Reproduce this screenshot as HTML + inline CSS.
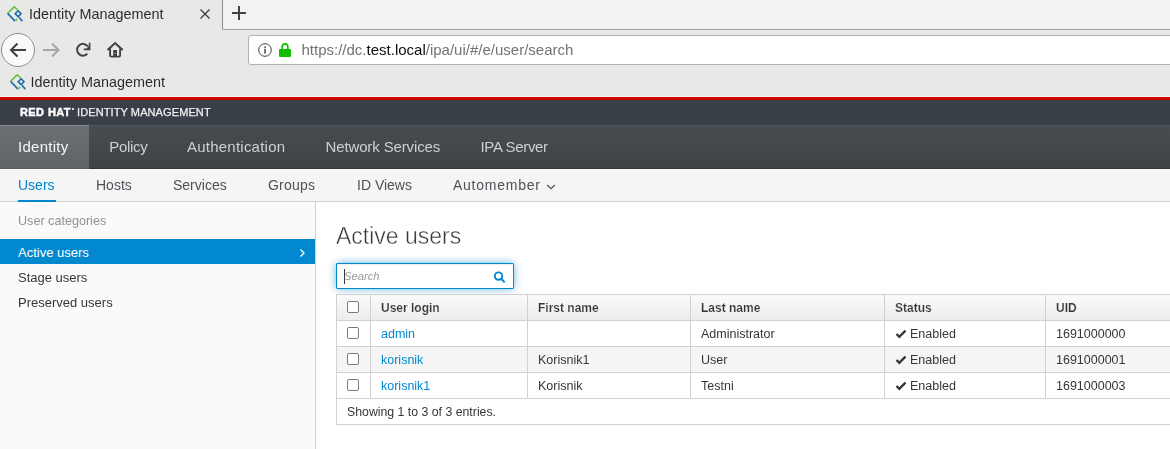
<!DOCTYPE html>
<html><head><meta charset="utf-8">
<style>
*{margin:0;padding:0;box-sizing:border-box}
html,body{width:1170px;height:449px;overflow:hidden;background:#fff;font-family:"Liberation Sans",sans-serif}
.a{position:absolute;white-space:nowrap}
#tabstrip{position:absolute;left:0;top:0;width:1170px;height:29px;background:#f2f2f2}
#acttab{position:absolute;left:0;top:0;width:223px;height:30px;background:#e8e8e7;border-right:1px solid #8f8f8f}
#tabline{position:absolute;left:222px;top:29px;width:948px;height:1px;background:#a4a4a4}
#toolbar{position:absolute;left:0;top:30px;width:1170px;height:67px;background:#e8e8e7}
#urlbar{position:absolute;left:248px;top:35px;width:930px;height:30px;background:#fff;border:1px solid #b1b1b1;border-radius:3px}
#red{position:absolute;left:0;top:97px;width:1170px;height:3px;background:#cc0000}
#mast{position:absolute;left:0;top:100px;width:1170px;height:25px;background:#393f46}
#nav{position:absolute;left:0;top:125px;width:1170px;height:44px;background:linear-gradient(#474c50,#3e4347);border-top:1px solid #505559;border-bottom:1px solid #33373b}
#navact{position:absolute;left:0;top:125px;width:89px;height:44px;background:linear-gradient(#6c7074,#5f6367);border-top:1px solid #84878a}
#subnav{position:absolute;left:0;top:169px;width:1170px;height:33px;background:#f5f5f5;border-bottom:1px solid #d1d1d1}
#side{position:absolute;left:0;top:202px;width:316px;height:247px;background:#fafafa;border-right:1px solid #d1d1d1}
.nv{font-size:15px;color:#cfcfcf;top:138px}
.sn{font-size:14px;color:#4d5258;top:177px}
.cb{left:347px;width:12px;height:12px;border:1px solid #7b7b7b;border-radius:2px;background:#fff}
.th{font-size:12px;font-weight:700;line-height:1;color:#363636;top:302px;-webkit-text-stroke:0.15px #f2f2f2}
.td{font-size:12.5px;line-height:1;color:#363636}
.lk{color:#0088ce}
</style></head><body><div style="position:absolute;left:0;top:0;width:1170px;height:449px;overflow:hidden;will-change:opacity;opacity:0.999">
<div id="tabstrip"></div>
<div id="acttab"></div>
<div id="tabline"></div>
<div id="toolbar"></div>
<div id="urlbar"></div>
<div class="a" style="left:0;top:96px;width:1170px;height:1px;background:#f2f2f1"></div>
<div id="red"></div>
<div id="mast"></div>
<div id="nav"></div>
<div id="navact"></div>
<div id="subnav"></div>
<div id="side"></div>

<!-- tab content -->
<svg class="a" style="left:7px;top:6px" width="16" height="16" viewBox="0 0 16 16"><path d="M0.6 7.4 L7.3 0.7 L10.9 4.3" fill="none" stroke="#6fbe44" stroke-width="1.6"/><path d="M0.6 7.4 L8 15.1" fill="none" stroke="#1a6cae" stroke-width="1.6"/><path d="M8.5 14.6 L10.1 13" fill="none" stroke="#6fbe44" stroke-width="1.6"/><path d="M11.1 4.8 L14 7.7 L11.1 10.6 L8.2 7.7 Z" fill="none" stroke="#1a6cae" stroke-width="1.6"/><path d="M11.9 11.3 L15.4 15.1" fill="none" stroke="#1a6cae" stroke-width="1.6"/></svg>
<div class="a" style="left:29px;top:6.5px;font-size:14.4px;line-height:1;color:#2b2e31">Identity Management</div>
<svg class="a" style="left:199px;top:8px" width="12" height="12" viewBox="0 0 12 12"><path d="M1.5 1.5 L10.5 10.5 M10.5 1.5 L1.5 10.5" stroke="#3d4246" stroke-width="1.4"/></svg>
<svg class="a" style="left:231px;top:5px" width="16" height="16" viewBox="0 0 16 16"><path d="M8 1 L8 15 M1 8 L15 8" stroke="#3d4246" stroke-width="2"/></svg>
<!-- toolbar -->
<div class="a" style="left:1px;top:33px;width:34px;height:34px;border-radius:50%;background:#f9f9f9;border:1px solid #8f8f8f"></div>
<svg class="a" style="left:9px;top:42px" width="18" height="16" viewBox="0 0 18 16"><path d="M2 8 L17 8 M8.5 1.5 L2 8 L8.5 14.5" fill="none" stroke="#3d4246" stroke-width="2"/></svg>
<svg class="a" style="left:42px;top:42px" width="18" height="16" viewBox="0 0 18 16"><path d="M1 8 L16.5 8 M10 1.5 L16.5 8 L10 14.5" fill="none" stroke="#a6a7a8" stroke-width="2.1"/></svg>
<svg class="a" style="left:75px;top:42px" width="17" height="16" viewBox="0 0 17 16"><path d="M12.3 11.8 A5.9 5.9 0 1 1 12.8 4.3" fill="none" stroke="#3d4246" stroke-width="2"/><path d="M15.4 0.8 L15.4 8.2 L8.8 8.2 L8.8 6.6 L11.6 6.6 L13.8 3.9 L13.8 0.8 Z" fill="#3d4246"/></svg>
<svg class="a" style="left:106px;top:41px" width="18" height="18" viewBox="0 0 18 18"><path d="M2.1 8.5 L9.1 2.1 L16.1 8.5" fill="none" stroke="#3d4246" stroke-width="2" stroke-linecap="round"/><path d="M4.1 7.6 L4.1 14.4 Q4.1 15.6 5.3 15.6 L12.9 15.6 Q14.1 15.6 14.1 14.4 L14.1 7.6" fill="none" stroke="#3d4246" stroke-width="1.9"/><rect x="7.2" y="9" width="3.8" height="6.6" fill="#3d4246"/><circle cx="9.1" cy="12.3" r="0.6" fill="#ddd"/></svg>
<svg class="a" style="left:258px;top:43px" width="14" height="14" viewBox="0 0 14 14"><circle cx="7" cy="7" r="6.3" fill="none" stroke="#3d4246" stroke-width="1"/><rect x="6.3" y="5.8" width="1.5" height="4.8" fill="#3d4246"/><rect x="6.3" y="3.4" width="1.5" height="1.5" fill="#3d4246"/></svg>
<svg class="a" style="left:279px;top:42px" width="12" height="15" viewBox="0 0 12 15"><path d="M3.2 7.5 L3.2 4.6 A2.8 2.8 0 0 1 8.8 4.6 L8.8 7.5" fill="none" stroke="#12bc00" stroke-width="1.8"/><rect x="0" y="7.1" width="12" height="7.8" rx="0.8" fill="#12bc00"/></svg>
<div class="a" style="left:301.5px;top:41.8px;font-size:15px;line-height:1;color:#737373">https://dc.<span style="color:#0c0c0d">test.local</span>/ipa/ui/#/e/user/search</div>
<!-- bookmark -->
<svg class="a" style="left:10px;top:74px" width="16" height="16" viewBox="0 0 16 16"><path d="M0.6 7.4 L7.3 0.7 L10.9 4.3" fill="none" stroke="#6fbe44" stroke-width="1.6"/><path d="M0.6 7.4 L8 15.1" fill="none" stroke="#1a6cae" stroke-width="1.6"/><path d="M8.5 14.6 L10.1 13" fill="none" stroke="#6fbe44" stroke-width="1.6"/><path d="M11.1 4.8 L14 7.7 L11.1 10.6 L8.2 7.7 Z" fill="none" stroke="#1a6cae" stroke-width="1.6"/><path d="M11.9 11.3 L15.4 15.1" fill="none" stroke="#1a6cae" stroke-width="1.6"/></svg>
<div class="a" style="left:30.5px;top:74.7px;font-size:14.4px;line-height:1;color:#2b2e31">Identity Management</div>

<!-- nav text -->
<div class="a nv" style="left:18px;color:#f5f5f5;letter-spacing:0.28px">Identity</div>
<div class="a nv" style="left:109.2px;letter-spacing:-0.3px">Policy</div>
<div class="a nv" style="left:187px;letter-spacing:0.23px">Authentication</div>
<div class="a nv" style="left:325.5px;letter-spacing:-0.13px">Network Services</div>
<div class="a nv" style="left:480.5px;letter-spacing:-0.33px">IPA Server</div>

<div class="a sn" style="left:18px;color:#0088ce">Users</div>
<div class="a" style="left:18px;top:200px;width:38px;height:2px;background:#0088ce"></div>
<div class="a sn" style="left:96px">Hosts</div>
<div class="a sn" style="left:173px">Services</div>
<div class="a sn" style="left:268px;letter-spacing:0.2px">Groups</div>
<div class="a sn" style="left:357px">ID Views</div>
<div class="a sn" style="left:453px;letter-spacing:0.75px">Automember</div>
<svg class="a" style="left:546px;top:183px" width="10" height="7" viewBox="0 0 10 7"><path d="M1.2 2 L5 5.6 L8.8 2" fill="none" stroke="#4d5258" stroke-width="1.2"/></svg>


<!-- masthead logo -->
<div class="a" style="left:20px;top:104px;font-size:11px;line-height:16px;color:#fff;font-weight:700;letter-spacing:0.4px;-webkit-text-stroke:0.4px #fff">RED HAT</div>
<div class="a" style="left:72px;top:108px;width:2px;height:2px;background:#ddd"></div>
<div class="a" style="left:77px;top:104px;font-size:11px;line-height:16px;color:#f0f0f0;letter-spacing:0.1px;-webkit-text-stroke:0.25px #f0f0f0">IDENTITY MANAGEMENT</div>

<!-- sidebar -->
<div class="a" style="left:18px;top:215px;font-size:12.6px;line-height:1;color:#8f9193">User categories</div>
<div class="a" style="left:0;top:239px;width:315px;height:25px;background:#0088ce"></div>
<div class="a" style="left:18px;top:246px;font-size:13px;line-height:1;color:#fff">Active users</div>
<svg class="a" style="left:298px;top:248px" width="8" height="10" viewBox="0 0 8 10"><path d="M2.5 1.5 L6 5 L2.5 8.5" fill="none" stroke="#fff" stroke-width="1.3"/></svg>
<div class="a" style="left:18px;top:271px;font-size:13px;line-height:1;color:#363636">Stage users</div>
<div class="a" style="left:18px;top:295.7px;font-size:13px;line-height:1;color:#363636">Preserved users</div>

<!-- content -->
<div class="a" style="left:336px;top:224.5px;font-size:23px;line-height:1;color:#363636;-webkit-text-stroke:0.45px #fff">Active users</div>
<div class="a" style="left:336px;top:263px;width:178px;height:26px;background:#fff;border:1px solid #0088ce;border-radius:1px;box-shadow:inset 0 1px 1px rgba(3,3,3,.075),0 0 8px rgba(0,136,206,.6)"></div>
<div class="a" style="left:344px;top:269px;width:1px;height:15px;background:#333"></div>
<div class="a" style="left:344px;top:270.5px;font-size:11.2px;line-height:1;color:#999;font-style:italic">Search</div>
<svg class="a" style="left:493px;top:271px" width="13" height="13" viewBox="0 0 13 13"><circle cx="5.5" cy="5.1" r="3.7" fill="none" stroke="#0088ce" stroke-width="1.9"/><path d="M8.2 7.8 L11.1 10.7" stroke="#0088ce" stroke-width="2" stroke-linecap="round"/></svg>

<div id="tbl" class="a" style="left:336px;top:294px;width:900px;height:131px;border:1px solid #d1d1d1"></div>
<div class="a" style="left:337px;top:295px;width:900px;height:25px;background:linear-gradient(#fafafa,#ededed)"></div>
<div class="a" style="left:337px;top:320px;width:900px;height:1px;background:#d1d1d1"></div>
<div class="a" style="left:337px;top:346px;width:900px;height:1px;background:#d1d1d1"></div>
<div class="a" style="left:337px;top:347px;width:900px;height:25px;background:#f5f5f5"></div>
<div class="a" style="left:337px;top:372px;width:900px;height:1px;background:#d1d1d1"></div>
<div class="a" style="left:337px;top:398px;width:900px;height:1px;background:#d1d1d1"></div>
<div class="a" style="left:370px;top:295px;width:1px;height:103px;background:#d1d1d1"></div>
<div class="a" style="left:527px;top:295px;width:1px;height:103px;background:#d1d1d1"></div>
<div class="a" style="left:690px;top:295px;width:1px;height:103px;background:#d1d1d1"></div>
<div class="a" style="left:884px;top:295px;width:1px;height:103px;background:#d1d1d1"></div>
<div class="a" style="left:1045px;top:295px;width:1px;height:103px;background:#d1d1d1"></div>

<div class="a cb" style="top:301px"></div>
<div class="a cb" style="top:327px"></div>
<div class="a cb" style="top:353px"></div>
<div class="a cb" style="top:379px"></div>

<div class="a th" style="left:381px">User login</div>
<div class="a th" style="left:538px">First name</div>
<div class="a th" style="left:701px">Last name</div>
<div class="a th" style="left:895px">Status</div>
<div class="a th" style="left:1056px">UID</div>

<div class="a td lk" style="left:381px;top:328px">admin</div>
<div class="a td" style="left:701px;top:328px">Administrator</div>
<div class="a td" style="left:910px;top:328px">Enabled</div>
<div class="a td" style="left:1056px;top:328px">1691000000</div>

<div class="a td lk" style="left:381px;top:354px">korisnik</div>
<div class="a td" style="left:538px;top:354px">Korisnik1</div>
<div class="a td" style="left:701px;top:354px">User</div>
<div class="a td" style="left:910px;top:354px">Enabled</div>
<div class="a td" style="left:1056px;top:354px">1691000001</div>

<div class="a td lk" style="left:381px;top:380px">korisnik1</div>
<div class="a td" style="left:538px;top:380px">Korisnik</div>
<div class="a td" style="left:701px;top:380px">Testni</div>
<div class="a td" style="left:910px;top:380px">Enabled</div>
<div class="a td" style="left:1056px;top:380px">1691000003</div>

<svg class="a" style="left:895px;top:328px" width="12" height="12" viewBox="0 0 12 12"><path d="M1.5 6 L4.3 8.8 L10.5 2.6" fill="none" stroke="#363636" stroke-width="2.4"/></svg>
<svg class="a" style="left:895px;top:354px" width="12" height="12" viewBox="0 0 12 12"><path d="M1.5 6 L4.3 8.8 L10.5 2.6" fill="none" stroke="#363636" stroke-width="2.4"/></svg>
<svg class="a" style="left:895px;top:380px" width="12" height="12" viewBox="0 0 12 12"><path d="M1.5 6 L4.3 8.8 L10.5 2.6" fill="none" stroke="#363636" stroke-width="2.4"/></svg>

<div class="a" style="left:347px;top:406px;font-size:12.3px;line-height:1;color:#363636">Showing 1 to 3 of 3 entries.</div>
</div></body></html>
